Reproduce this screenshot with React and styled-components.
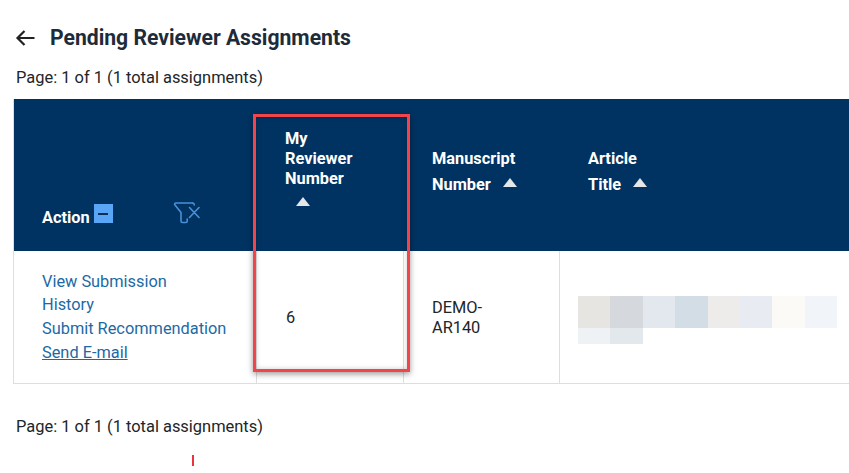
import React from 'react';
import styled, { createGlobalStyle } from 'styled-components';

const Global = createGlobalStyle`
  html, body { margin: 0; padding: 0; background: #fff; overflow: hidden; }
  body { font-family: Roboto, "Liberation Sans", sans-serif; color: #212529; }
`;
const Page = styled.div`
  position: relative; width: 849px; height: 473px; overflow: hidden;
  display: flex; flex-direction: column; padding: 24px 0 0 13px; box-sizing: border-box;
`;
const TitleRow = styled.div`
  display: flex; align-items: center; gap: 14px; height: 28px; padding-left: 2px;
`;
const BackIcon = styled.svg`width: 21px; height: 18px; flex: none; color: #222;`;
const Title = styled.h1`
  margin: 0; font-size: 21.15px; font-weight: 700; color: #1d2b3a; line-height: 28px;
`;
const PageInfo = styled.div`
  font-size: 16.45px; line-height: 20px; color: #212529; padding-left: 3px; margin-top: ${p => p.$top}px;
`;
const Table = styled.table`
  border-collapse: separate; border-spacing: 0; table-layout: fixed; width: 836px; margin-top: 11px;
  border-left: 1px solid #dedede; border-bottom: 1px solid #dedede;
`;
const Head = styled.th`
  width: ${p => p.$w}px; height: 152px; box-sizing: border-box; background: #003361; color: #fff;
  font-size: 16.35px; font-weight: 700; text-align: left;
  padding: 0 0 ${p => p.$bottom || 0}px ${p => p.$pad}px;
  vertical-align: ${p => p.$align || 'middle'};
`;
const HeadLine = styled.div`line-height: ${p => p.$lh}px;`;
const Sort = styled.span`
  display: inline-block; width: 0; height: 0; border-left: 7.5px solid transparent;
  border-right: 7.5px solid transparent; border-bottom: 9px solid #e4e6e8;
  margin-left: ${p => p.$ml}px; vertical-align: ${p => p.$va}px;
`;
const ActionHead = styled.div`display: flex; align-items: flex-end; padding-bottom: 24px;`;
const ActionLabel = styled.span`line-height: 20px; margin-bottom: -1px;`;
const Minus = styled.span`
  width: 19px; height: 19px; background: #58a6f5; margin: 0 0 4px 4px;
  display: flex; align-items: center; justify-content: center;
  &::before { content: ""; width: 10px; height: 2px; background: #0b2f55; }
`;
const FilterIcon = styled.svg`width: 27px; height: 23px; margin: 0 0 3.5px 60.5px; color: #4a90d9;`;
const Cell = styled.td`
  height: 132px; box-sizing: border-box; font-size: 16.35px; line-height: 23.65px; color: #212529;
  padding: ${p => p.$top ?? 2}px 0 0 ${p => p.$pad}px; vertical-align: middle; border-left: ${p => p.$line ? '1px solid #dedede' : 'none'};
`;
const TwoLine = styled.div`line-height: 20px;`;
const LinkItem = styled.a`
  display: block; color: #1b6aa5; text-decoration: ${p => p.$u ? 'underline' : 'none'};
  &:hover { text-decoration: underline; }
`;
const Mosaic = styled.div`display: grid; grid-template-columns: repeat(8, 32.4px); grid-auto-rows: auto;`;
const Tile = styled.div`background: ${p => p.$c}; height: ${p => p.$h}px;`;
const Highlight = styled.div`
  position: absolute; left: 253px; top: 114px; width: 157px; height: 258px; box-sizing: border-box;
  border: 3px solid #f4444b; box-shadow: 0 2px 6px rgba(0,0,0,.4), inset 0 0 5px rgba(0,0,0,.2);
  pointer-events: none;
`;
const Tick = styled.div`
  position: absolute; left: 192px; top: 455px; width: 2px; height: 11px; background: #e8343c;
`;

const row1 = ['#e6e5e1', '#d5d8dc', '#e3e7ee', '#d3dde6', '#edecea', '#e8ebf2', '#fbfaf6', '#f1f5f9'];
const row2 = ['#eef2f5', '#e3e8ec'];

export default function App() {
  return (
    <Page>
      <Global />
      <TitleRow>
        <BackIcon viewBox="0 0 21 18" fill="none" stroke="currentColor" strokeWidth="2.2">
          <path d="M19.5 9H2.5M9.5 2 2.5 9l7 7" />
        </BackIcon>
        <Title>Pending Reviewer Assignments</Title>
      </TitleRow>
      <PageInfo $top={16}>Page: 1 of 1 (1 total assignments)</PageInfo>
      <Table>
        <thead>
          <tr>
            <Head $w={242} $pad={28} $align="bottom">
              <ActionHead>
                <ActionLabel>Action</ActionLabel>
                <Minus />
                <FilterIcon viewBox="0 0 27 23" fill="none" stroke="currentColor" strokeWidth="1.6" strokeLinejoin="round" strokeLinecap="round">
                  <path d="M19.5 2H3C1.6 2 1.2 3.2 2 4.1L8 11.5v8.6c0 1 .6 1.4 1.4 1.4h3.4c.9 0 1.4-.5 1.4-1.3V18" />
                  <path d="M19.5 2c1.2.1 1.8.8 1.8 1.9M16.5 6.5l9.5 10M26 6.5l-9.5 10" />
                </FilterIcon>
              </ActionHead>
            </Head>
            <Head $w={147} $pad={29} $bottom={6}>
              <HeadLine $lh={20}>My</HeadLine>
              <HeadLine $lh={20}>Reviewer</HeadLine>
              <HeadLine $lh={20}>Number</HeadLine>
              <HeadLine $lh={26}><Sort $ml={11} $va={1} /></HeadLine>
              <HeadLine $lh={26} />
            </Head>
            <Head $w={156} $pad={29} $bottom={6}>
              <HeadLine $lh={26}>Manuscript</HeadLine>
              <HeadLine $lh={26}>Number<Sort $ml={12} $va={3} /></HeadLine>
            </Head>
            <Head $pad={29} $bottom={6}>
              <HeadLine $lh={26}>Article</HeadLine>
              <HeadLine $lh={26}>Title<Sort $ml={12} $va={3} /></HeadLine>
            </Head>
          </tr>
        </thead>
        <tbody>
          <tr>
            <Cell $pad={28} $top={0}>
              <LinkItem>View Submission</LinkItem>
              <LinkItem>History</LinkItem>
              <LinkItem>Submit Recommendation</LinkItem>
              <LinkItem $u>Send E-mail</LinkItem>
            </Cell>
            <Cell $pad={29} $line>6</Cell>
            <Cell $pad={28} $line><TwoLine>DEMO-<br />AR140</TwoLine></Cell>
            <Cell $pad={18} $top={6} $line>
              <Mosaic>
                {row1.map(c => <Tile key={c} $c={c} $h={32} />)}
                {row2.map(c => <Tile key={c} $c={c} $h={16} />)}
              </Mosaic>
            </Cell>
          </tr>
        </tbody>
      </Table>
      <PageInfo $top={33}>Page: 1 of 1 (1 total assignments)</PageInfo>
      <Highlight />
      <Tick />
    </Page>
  );
}
